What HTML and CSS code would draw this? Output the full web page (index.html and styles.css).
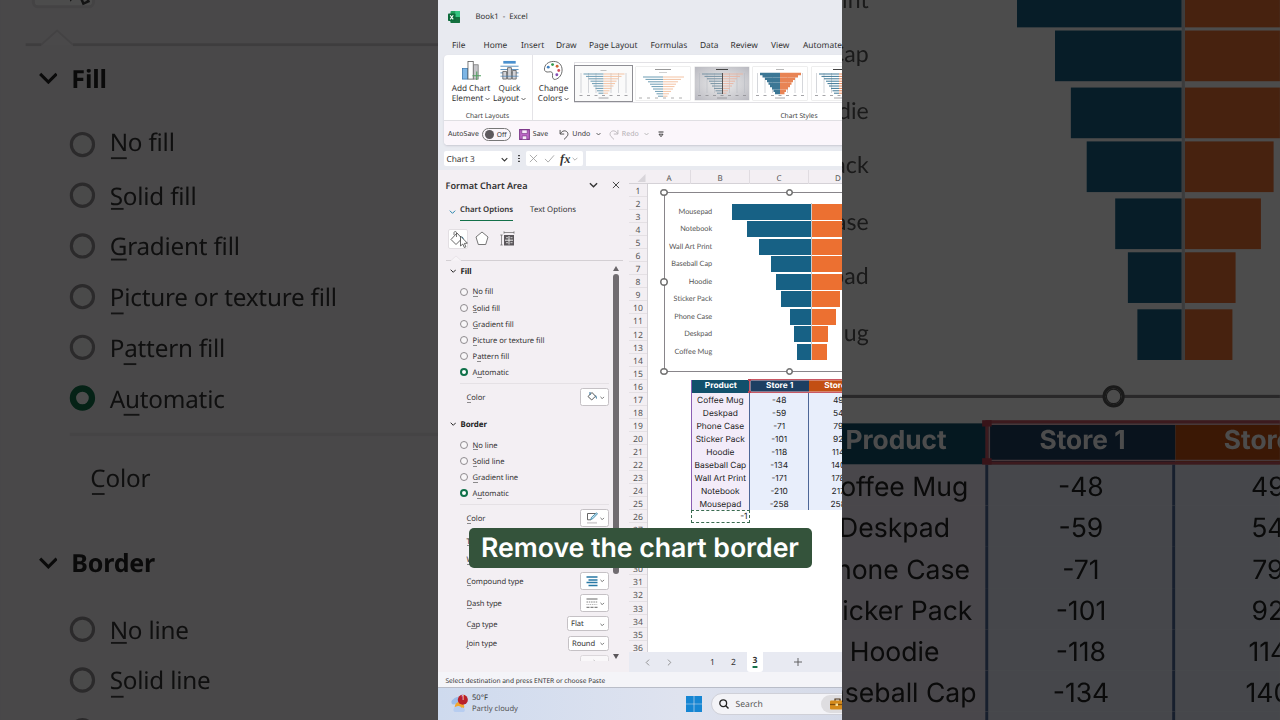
FILE: index.html
```html
<!DOCTYPE html>
<html lang="en">
<head>
  <meta charset="UTF-8">
  <title>Book1 - Excel</title>
  <meta name="viewport" content="width=device-width, initial-scale=1.0">
  <link rel="stylesheet" href="styles.css">
</head>
<body>

  <!-- shared shapes -->
  <svg class="defs" width="0" height="0">
    <symbol id="chev" viewBox="0 0 10 6"><path d="M1 1l4 4 4-4" fill="none" stroke="currentColor" stroke-width="1.5"/></symbol>
    <symbol id="bars-left" viewBox="0 0 54 33"><path d="M7 7H27M9.5 9.4H27M12 11.8H27M14 14.2H27M15.5 16.6H27M17 19H27M19 21.4H27M20.5 23.8H27M22 26.2H27" fill="none" stroke="currentColor"/></symbol>
    <symbol id="bars-right" viewBox="0 0 54 33"><path d="M27 7H48M27 9.4H45M27 11.8H42M27 14.2H40M27 16.6H38.5M27 19H37M27 21.4H35M27 23.8H33M27 26.2H31.5" fill="none" stroke="currentColor"/></symbol>
    <symbol id="thumb-grid" viewBox="0 0 54 33"><path d="M4.5 6v20M12 6v20M19.5 6v20M34.5 6v20M42 6v20M49.5 6v20" stroke="#b9bcc3" stroke-width=".6"/><path d="M3 28.5h3M10.5 28.5h3M18 28.5h3M25.5 28.5h3M33 28.5h3M40.5 28.5h3M48 28.5h3M22 31h10" stroke="#8d8d92" stroke-width=".8"/></symbol>
  </svg>

  <div class="backdrop" id="backdrop"></div>

  <div class="screen" id="screen">

    <!-- title bar -->
    <div class="titlebar">
      <svg class="xl" viewBox="0 0 12 12"><rect x="2.5" width="9.5" height="12" rx="1" fill="#1f9d5b"/><rect x="7.2" width="4.8" height="6" fill="#35c481"/><rect x="2.5" y="6" width="9.5" height="6" rx="1" fill="#14713f"/><rect y="2.5" width="7.5" height="7.5" rx=".8" fill="#0d6b3b"/><path d="M2.2 4.2l3 4.2M5.2 4.2l-3 4.2" stroke="#fff" stroke-width="1.1"/></svg>
      <span>Book1&nbsp; -&nbsp; Excel</span>
    </div>

    <div class="tabs">
      <span>File</span><span>Home</span><span>Insert</span><span>Draw</span><span>Page Layout</span><span>Formulas</span><span>Data</span><span>Review</span><span>View</span><span>Automate</span>
    </div>

    <!-- ribbon -->
    <div class="ribbon">
      <div class="ribbon-main">
        <div class="group layouts">
          <div class="tools">
            <div class="tool">
              <svg viewBox="0 0 22 22"><rect x="1.5" y="9" width="5.5" height="11" fill="#7db5e4" stroke="#3b78ad" stroke-width=".8"/><rect x="7.3" y="1.5" width="5.5" height="18.5" fill="#fff" stroke="#555" stroke-width=".8"/><rect x="13" y="5" width="5" height="15" fill="#c6c6c9" stroke="#777" stroke-width=".8"/><path d="M16.5 12v9M12 16.5h9" stroke="#4f9f5f" stroke-width="1.1"/></svg>
              <span>Add Chart</span><span>Element <svg class="chev"><use href="#chev"/></svg></span>
            </div>
            <div class="tool quick">
              <svg viewBox="0 0 22 22"><rect x="4.5" y="1" width="13" height="2.8" fill="#4a90cf"/><path d="M1.5 6.5h19M1.5 10h19M1.5 13.5h19" stroke="#3f7eb5" stroke-width=".9"/><path d="M4 12h4v8H4zM9 8h4v12H9zM14 11h4v9h-4z" fill="#d2d2d6" stroke="#555" stroke-width=".8"/><path d="M1.5 17h19" stroke="#3f7eb5" stroke-width=".7"/></svg>
              <span>Quick</span><span>Layout <svg class="chev"><use href="#chev"/></svg></span>
            </div>
          </div>
          <div class="group-name">Chart Layouts</div>
        </div>
        <div class="group styles">
          <div class="tools">
            <div class="tool colors">
              <svg viewBox="0 0 22 22"><path d="M11 1.5C5.5 1.5 1.5 5 1.5 9.5c0 2.5 2 3.5 4.5 3 3-.7 4.5.5 4 3.5-.5 3 1 4.800 3 4.300 4-1 7-5 7-9.800C20 5 16.5 1.5 11 1.5z" fill="#fff" stroke="#555" stroke-width=".9"/><circle cx="5.5" cy="7.5" r="1.5" fill="#3f7fc0"/><circle cx="10" cy="4.8" r="1.5" fill="#2f9a4a"/><circle cx="14.8" cy="6.5" r="1.5" fill="#d0662f"/><circle cx="16.5" cy="11" r="1.5" fill="#d14b5a"/><circle cx="14.5" cy="15.5" r="1.5" fill="#8452b5"/></svg>
              <span>Change</span><span>Colors <svg class="chev"><use href="#chev"/></svg></span>
            </div>
            <div class="gallery">
              <svg class="thumb picked" viewBox="0 0 54 33"><use href="#thumb-grid"/><path d="M24 3.5h6" stroke="#aaa" stroke-width=".7"/><use class="blue" href="#bars-left"/><use class="peach" href="#bars-right"/></svg>
              <svg class="thumb" viewBox="0 0 54 33"><path d="M19 2.5h16" stroke="#999"/><path d="M23 5.5h8" stroke="#bbb" stroke-width=".7"/><path d="M3 31h3M11 31h3M19 31h3M27 31h3M35 31h3M43 31h3" stroke="#999" stroke-width=".8"/><g transform="translate(0 3)"><use class="blue" href="#bars-left"/><use class="peach" href="#bars-right"/></g></svg>
              <svg class="thumb shade" viewBox="0 0 54 33"><use href="#thumb-grid"/><path d="M21 2.5h12" stroke="#444"/><use class="steel" href="#bars-left"/><use class="rose" href="#bars-right"/><path d="M27.5 6v21" stroke="#444" stroke-width=".9"/></svg>
              <svg class="thumb wide" viewBox="0 0 54 33"><use href="#thumb-grid"/><path d="M23 2.5h8" stroke="#999" stroke-width=".7"/><use class="navy" href="#bars-left"/><use class="orange" href="#bars-right"/></svg>
              <svg class="thumb" viewBox="0 0 54 33"><use href="#thumb-grid"/><path d="M21 2.5h12" stroke="#444"/><use class="navy" href="#bars-left"/><use class="orange" href="#bars-right"/></svg>
            </div>
          </div>
          <div class="group-name">Chart Styles</div>
        </div>
      </div>
      <div class="qat">
        <span>AutoSave</span>
        <span class="toggle"><i></i>Off</span>
        <svg class="save" viewBox="0 0 12 12"><path d="M.7.7h10.6v10.6H.7z" fill="#c06ac9" stroke="#7f3a8c" stroke-width="1.2"/><path d="M3 1h6v4H3zM3.5 7.5h5v4h-5z" fill="#f7e9f8" stroke="#7f3a8c" stroke-width=".8"/></svg>
        <span class="save-t">Save</span>
        <svg class="undo" viewBox="0 0 11 12"><path d="M1.2 1v4.5h4.5M1.5 5.2C3 2.5 5.2 1.5 7.3 2.2c2.8 1 3.2 4 1.5 6L5.5 11.4" fill="none" stroke="#444"/></svg>
        <span class="undo-t">Undo</span><svg class="chev"><use href="#chev"/></svg>
        <svg class="redo" viewBox="0 0 11 12"><path d="M9.8 1v4.5H5.3M9.5 5.2C8 2.5 5.8 1.5 3.7 2.2c-2.8 1-3.2 4-1.5 6L5.5 11.4" fill="none" stroke="#b9b5ba"/></svg>
        <span class="redo-t">Redo</span><svg class="chev dim"><use href="#chev"/></svg>
        <svg class="more" viewBox="0 0 6 7"><path d="M.5 1h5" stroke="#333"/><path d="M1 3.2h4L3 5.7z" fill="none" stroke="#333" stroke-width=".9"/></svg>
      </div>
    </div>

    <!-- formula bar -->
    <div class="formula">
      <div class="name-box">Chart 3 <svg class="chev"><use href="#chev"/></svg></div>
      <svg class="grip" viewBox="0 0 2 8"><path d="M0 .7h2M0 4h2M0 7.3h2" stroke="#333" stroke-width="1.3"/></svg>
      <div class="fx-box">
        <svg viewBox="0 0 10 10"><path d="M1 1l8 8M9 1L1 9" stroke="#999" stroke-width=".9"/></svg>
        <svg class="tick" viewBox="0 0 12 10"><path d="M1 5.5L4.5 9 11 1.5" fill="none" stroke="#999" stroke-width=".9"/></svg>
        <b>fx</b><svg class="chev dim"><use href="#chev"/></svg>
      </div>
      <div class="formula-input"></div>
    </div>

    <div class="work">

      <!-- format pane -->
      <div class="pane">
        <div class="pane-head">
          <span>Format Chart Area</span>
          <svg class="down"><use href="#chev"/></svg>
          <svg class="close" viewBox="0 0 9 9"><path d="M1 1l7 7M8 1L1 8" stroke="#333" stroke-width="1"/></svg>
        </div>
        <div class="pane-tabs">
          <svg class="chev"><use href="#chev"/></svg>
          <span class="on">Chart Options</span><span>Text Options</span>
        </div>
        <div class="pane-icons">
          <div class="bucket">
            <svg viewBox="0 0 20 19"><path d="M3 9.5l6-6.5 5 5.5-6 6z" fill="#fff" stroke="#555" stroke-width=".9"/><path d="M6 5V2.5c0-1.2 2.5-1.2 2.5 0V7" fill="none" stroke="#555" stroke-width=".8"/><path d="M13.500 7c1.800.5 2 2 1.700 5" fill="none" stroke="#2f80a8" stroke-width="1.2"/><path d="M12.5 6v10l2.300-2 1.500 3.500 1.600-.7-1.500-3.400 3-.2z" fill="#fff" stroke="#444" stroke-width=".8"/></svg>
          </div>
          <svg class="penta" viewBox="0 0 14 15"><path d="M7 1l6 5-2.300 7.500H3.300L1 6z" fill="#fff" stroke="#555" stroke-width=".8"/></svg>
          <svg class="size" viewBox="0 0 15 15"><path d="M4 1.5h10M4 .3v2.4M14 .3v2.4M1.5 4v10M.3 4h2.4M.3 14h2.4" stroke="#666" stroke-width=".7"/><path d="M4 4h10v10.5H4z" fill="#5b575b"/><path d="M9 5v8.5M5 9.2h8" stroke="#eee" stroke-width="1"/><path d="M6 6.7h2M10.5 6.7h2M6 11.7h2M10.5 11.7h2" stroke="#eee" stroke-width=".8"/></svg>
        </div>
        <svg class="notch" viewBox="0 0 177 6"><path d="M5 5.5l5-4.5 5 4.500" fill="#f7f4f7" stroke="#e0dce0" stroke-width=".6"/><path d="M0 5.5h5M15 5.5h162" fill="none" stroke="#cfcbcf" stroke-width=".9"/></svg>

        <div class="pane-body">
          <div class="options">
            <div class="section"><svg class="chev"><use href="#chev"/></svg>Fill</div>
            <div class="radios">
              <div><i></i><span><u>N</u>o fill</span></div>
              <div><i></i><span><u>S</u>olid fill</span></div>
              <div><i></i><span><u>G</u>radient fill</span></div>
              <div><i></i><span><u>P</u>icture or texture fill</span></div>
              <div><i></i><span>P<u>a</u>ttern fill</span></div>
              <div><i class="on"></i><span>A<u>u</u>tomatic</span></div>
            </div>
            <div class="prop color"><span><u>C</u>olor</span>
              <div class="pick"><svg class="pic" viewBox="0 0 12 12"><path d="M2 5.5L6 1.5l3.5 3.7L5.7 9z" fill="#fff" stroke="#444" stroke-width=".9"/><path d="M4 4V1M9.7 4.5l.8 3" stroke="#2f6f96"/></svg><svg class="chev"><use href="#chev"/></svg></div>
            </div>
            <div class="section second"><svg class="chev"><use href="#chev"/></svg>Border</div>
            <div class="radios">
              <div><i></i><span><u>N</u>o line</span></div>
              <div><i></i><span><u>S</u>olid line</span></div>
              <div><i></i><span><u>G</u>radient line</span></div>
              <div><i class="on"></i><span>A<u>u</u>tomatic</span></div>
            </div>
            <div class="prop color"><span><u>C</u>olor</span>
              <div class="pick"><svg class="pic" viewBox="0 0 12 12"><path d="M9.5 1.5H1.5v6.3H5" fill="none" stroke="#555" stroke-width=".9"/><path d="M4.8 7.5l.7-2.2L10.5.8l1 1-4.8 5z" fill="#bfe0ee" stroke="#2b7ea3" stroke-width=".8"/><path d="M1 10.8h10" stroke="#d5d3d5" stroke-width="1.8"/></svg><svg class="chev"><use href="#chev"/></svg></div>
            </div>
            <div class="prop transp"><span><u>T</u>ransparency</span></div>
            <div class="prop width"><span><u>W</u>idth</span></div>
            <div class="prop compound"><span><u>C</u>ompound type</span>
              <div class="pick"><svg class="pic" viewBox="0 0 12 12"><path d="M.5 2h11M2.5 5h9M.5 7.5h11M2.5 10.5h9" stroke="#2878a5" stroke-width="1.5"/></svg><svg class="chev"><use href="#chev"/></svg></div>
            </div>
            <div class="prop dash"><span><u>D</u>ash type</span>
              <div class="pick"><svg class="pic" viewBox="0 0 12 12"><path d="M.5 2h11" stroke="#555" stroke-width=".9"/><path d="M.5 5h11" stroke="#777" stroke-width=".9" stroke-dasharray="1.5 .8"/><path d="M.5 7.5h11" stroke="#999" stroke-width=".8" stroke-dasharray="1 .8"/><path d="M.5 10.3h11" stroke="#555" stroke-width=".9" stroke-dasharray="3 1"/></svg><svg class="chev"><use href="#chev"/></svg></div>
            </div>
            <div class="prop cap"><span>C<u>a</u>p type</span><div class="pick text">Flat<svg class="chev"><use href="#chev"/></svg></div></div>
            <div class="prop join"><span><u>J</u>oin type</span><div class="pick text join-pick">Round<svg class="chev"><use href="#chev"/></svg></div></div>
            <div class="prop begin"><span><u>B</u>egin Arrow type</span><div class="pick faded"><svg class="pic" viewBox="0 0 12 12"><path d="M0 4h10M7.5 2L10 4 7.5 6" fill="none" stroke="#777" stroke-width=".8"/></svg></div></div>
          </div>
          <div class="scroll">
            <svg viewBox="0 0 6 5"><path d="M3 0l3 5H0z" fill="#6b676b"/></svg>
            <i></i>
            <svg viewBox="0 0 6 5"><path d="M3 5L0 0h6z" fill="#5b575b"/></svg>
          </div>
        </div>
      </div>

      <!-- worksheet -->
      <div class="book">
        <div class="sheet">
          <div class="corner"><svg viewBox="0 0 9 9"><path d="M9 0v9H0z" fill="#d8d5da"/></svg></div>
          <div class="cols"><span>A</span><span>B</span><span>C</span><span>D</span></div>
          <div class="rows">
            <span>1</span><span>2</span><span>3</span><span>4</span><span>5</span><span>6</span><span>7</span><span>8</span><span>9</span><span>10</span><span>11</span><span>12</span><span>13</span><span>14</span><span>15</span><span>16</span><span>17</span><span>18</span><span>19</span><span>20</span><span>21</span><span>22</span><span>23</span><span>24</span><span>25</span><span>26</span><span>27</span><span>28</span><span>29</span><span>30</span><span>31</span><span>32</span><span>33</span><span>34</span><span>35</span><span>36</span>
          </div>
          <div class="cells">
            <div class="data">
              <b>Product</b><b class="s1">Store 1</b><b class="s2">Store 2</b>
              <span>Coffee Mug</span><span>-48</span><span>49</span>
              <span>Deskpad</span><span>-59</span><span>54</span>
              <span>Phone Case</span><span>-71</span><span>79</span>
              <span>Sticker Pack</span><span>-101</span><span>92</span>
              <span>Hoodie</span><span>-118</span><span>114</span>
              <span>Baseball Cap</span><span>-134</span><span>140</span>
              <span>Wall Art Print</span><span>-171</span><span>178</span>
              <span>Notebook</span><span>-210</span><span>217</span>
              <span>Mousepad</span><span>-258</span><span>258</span>
              <div class="range"><i></i><i></i></div>
            </div>
            <div class="copied">-1</div>

            <!-- floating chart object -->
            <div class="chart">
              <div class="bar-row"><span>Mousepad</span><i class="neg" style="width:79px"></i><i class="pos" style="width:79px"></i></div>
              <div class="bar-row"><span>Notebook</span><i class="neg" style="width:64px"></i><i class="pos" style="width:66px"></i></div>
              <div class="bar-row"><span>Wall Art Print</span><i class="neg" style="width:52px"></i><i class="pos" style="width:54px"></i></div>
              <div class="bar-row"><span>Baseball Cap</span><i class="neg" style="width:40.5px"></i><i class="pos" style="width:43px"></i></div>
              <div class="bar-row"><span>Hoodie</span><i class="neg" style="width:35.5px"></i><i class="pos" style="width:35px"></i></div>
              <div class="bar-row"><span>Sticker Pack</span><i class="neg" style="width:30.5px"></i><i class="pos" style="width:27.8px"></i></div>
              <div class="bar-row"><span>Phone Case</span><i class="neg" style="width:21px"></i><i class="pos" style="width:23.6px"></i></div>
              <div class="bar-row"><span>Deskpad</span><i class="neg" style="width:17.7px"></i><i class="pos" style="width:16.2px"></i></div>
              <div class="bar-row"><span>Coffee Mug</span><i class="neg" style="width:14px"></i><i class="pos" style="width:14.5px"></i></div>
              <em class="axis"></em>
              <em class="handle tl"></em><em class="handle tm"></em><em class="handle ml"></em><em class="handle bl"></em><em class="handle bm"></em>
            </div>
          </div>
        </div>
        <div class="sheet-tabs">
          <svg class="nav" viewBox="0 0 5 8"><path d="M4.3.7L1 4l3.3 3.3" fill="none" stroke="#888"/></svg>
          <svg class="nav" viewBox="0 0 5 8"><path d="M.7.7L4 4 .7 7.3" fill="none" stroke="#888"/></svg>
          <span class="first">1</span><span>2</span><span class="on">3</span>
          <svg class="plus" viewBox="0 0 8 8"><path d="M4 0v8M0 4h8" stroke="#555" stroke-width=".9"/></svg>
        </div>
      </div>
    </div>

    <div class="status">Select destination and press ENTER or choose Paste</div>

    <!-- windows taskbar -->
    <div class="taskbar">
      <div class="weather">
        <svg viewBox="0 0 20 20"><path d="M3 10.5a3 3 0 0 1 .5-5.5 4.5 4.5 0 0 1 7-1l1 6z" fill="#9dbce8"/><circle cx="10" cy="13" r="5" fill="#f2a62d"/><path d="M5 18.5a3 3 0 0 1 1-5.5 4 4 0 0 1 6 1c3-1.5 5 2.5 2.5 4.5z" fill="#b7cdf0"/><circle cx="13.5" cy="5.5" r="5.3" fill="#b8202a"/></svg>
        <span class="count">1</span>
        <div>50°F<br><span>Partly cloudy</span></div>
      </div>
      <svg class="win" viewBox="0 0 16 16"><path d="M0 0h7.7v7.7H0zM8.3 0H16v7.7H8.3zM0 8.3h7.7V16H0zM8.3 8.3H16V16H8.3z" fill="#1686d3"/></svg>
      <div class="search">
        <svg viewBox="0 0 10 10"><circle cx="4.2" cy="4.2" r="3.4" fill="none" stroke="#222" stroke-width="1.3"/><path d="M6.8 6.8L9.5 9.5" stroke="#222" stroke-width="1.4"/></svg>
        <span>Search</span>
        <div class="case"><svg viewBox="0 0 14 12"><path d="M5 3V1h5v2" fill="none" stroke="#4a3216" stroke-width="1.2"/><rect y="2.5" width="14" height="9" rx="1" fill="#d48a1c"/><path d="M0 6.5h14" stroke="#7f4d0d" stroke-width="1.2"/><rect x="5.5" y="5.5" width="2.5" height="2.5" fill="#f5dd9a"/></svg></div>
      </div>
    </div>

    <div class="caption">Remove the chart border</div>
  </div>

  <script>
    // enlarged, dimmed copy of the screen fills both sides
    const screenEl = document.getElementById('screen');
    const copy = screenEl.cloneNode(true);
    copy.removeAttribute('id');
    copy.setAttribute('aria-hidden', 'true');
    document.getElementById('backdrop').appendChild(copy);
  </script>
</body>
</html>
```
FILE: styles.css
```css
/* ==== Reset & Base ==== */
* { margin:0; padding:0; box-sizing:border-box; }
html, body { width:1280px; height:720px; overflow:hidden; background:#494749; }
body {
  font-family:"Noto Sans","Open Sans",sans-serif;
  font-size:8px; color:#333; position:relative;
  display:flex; justify-content:center;
  text-rendering:geometricPrecision;
}
i, em { font-style:normal; display:block; }
svg { display:block; flex:none; }
.defs { position:absolute; }

.screen {
  width:404px; height:720px; overflow:hidden; position:relative; flex:none;
  display:flex; flex-direction:column; background:#e8eaf0;
}
.backdrop {
  position:absolute; inset:0; overflow:hidden;
  display:flex; justify-content:center; filter:brightness(.3);
}
.backdrop .screen { transform:scale(3.168); }
/* parts of the copy that never reach the sides */
.backdrop .titlebar, .backdrop .tabs, .backdrop .ribbon, .backdrop .formula,
.backdrop .pane-head, .backdrop .pane-tabs, .backdrop .cols, .backdrop .rows,
.backdrop .copied, .backdrop .prop:not(.color), .backdrop .second ~ .color,
.backdrop .sheet-tabs, .backdrop .status, .backdrop .taskbar, .backdrop .caption { visibility:hidden; }
.chev { width:5px; height:4px; }
.dim { color:#aaa; }

/* ==== title + tabs ==== */
.titlebar { height:33px; padding:0 0 0 10px; display:flex; align-items:center; gap:15.5px; font-size:7.8px; flex:none; }
.xl { width:12px; height:12px; }
.tabs {
  height:22px; flex:none; padding-left:14px; white-space:nowrap; line-height:25px; font-size:8.4px; color:#333;
  display:grid; grid-template-columns:31.5px 37.5px 35px 33px 61.5px 49.5px 30.5px 40.5px 32px 60px;
}

/* ==== ribbon ==== */
.ribbon { margin-left:5.5px; width:410px; height:90px; flex:none; border-radius:4px; overflow:hidden; background:#fff; box-shadow:0 1px 2px #c9c9d2; }
.ribbon-main { height:66px; display:flex; border-bottom:1px solid #e0dfe3; }
.group { padding-top:5px; }
.layouts { width:89px; border-right:1px solid #e4e3e7; flex:none; }
.styles { flex:1; }
.tools { display:flex; height:49px; }
.layouts .tools { padding-left:7px; }
.tool { width:41px; flex:none; display:flex; flex-direction:column; align-items:center; font-size:8.2px; line-height:10.5px; white-space:nowrap; }
.tool > svg { width:21px; height:21px; margin-bottom:2.5px; }
.tool span { display:flex; align-items:center; gap:2px; }
.quick { width:36px; }
.colors { width:42px; }
.group-name { font-size:6.7px; line-height:13px; text-align:center; color:#444; }
.styles .group-name { margin-left:214px; width:105px; }
.gallery { display:flex; gap:4.5px; height:41px; margin:2px 0 0 -1px; padding:2px 1px; width:300px; border:1px solid #e2e1e5; border-right:0; }
.thumb { width:54px; height:33px; margin-top:2px; background:#fff; box-shadow:0 0 0 .5px #ddd; }
.picked { width:59px; height:37px; margin:0 -1px 0 -2px; padding:1px; background:#fafafa; border:1px solid #8e8e94; box-shadow:none; }
.shade { background:radial-gradient(#eee,#b9b9c0); }
.wide use.navy, .wide use.orange { stroke-width:2.3; }
.blue { color:#6d9cb3; } .peach { color:#f3c3a4; }
.steel { color:#7692a3; } .rose { color:#e8b7a5; }
.navy { color:#3c7795; } .orange { color:#e88455; }

.qat { height:24px; background:#fbf6fb; padding:2px 0 0 4.5px; display:flex; align-items:center; font-size:7px; }
.toggle { margin-left:3.5px; width:29px; height:13px; border:1px solid #777; border-radius:7px; display:flex; align-items:center; gap:3px; padding-left:1.5px; font-size:6.7px; }
.toggle i { width:9px; height:9px; border-radius:50%; background:#5d595d; }
.save { width:11px; height:11px; margin-left:8px; }
.save-t { margin-left:2.5px; width:26.5px; }
.undo, .redo { width:10px; height:11px; }
.undo-t { margin-left:3px; width:23.5px; }
.redo { margin-left:8px; }
.redo-t { margin-left:3px; width:22px; color:#b3afb4; }
.more { width:6px; height:7px; margin-left:9px; }

/* ==== formula bar ==== */
.formula { height:25px; padding:6px 0 4px 5.5px; display:flex; flex:none; align-items:stretch; }
.name-box { width:68px; background:#fff; border-radius:2px; padding:1px 4px 0 3px; display:flex; align-items:center; justify-content:space-between; font-size:8.3px; }
.name-box .chev { width:7px; height:5px; }
.grip { width:2px; height:7px; margin:4px 6px 0; }
.fx-box { width:57px; background:#fff; border-radius:2px; display:flex; align-items:center; gap:6px; padding-left:3px; }
.fx-box svg { width:9px; height:9px; }
.fx-box .tick { width:11px; }
.fx-box b { font:italic bold 12.5px "Liberation Serif",serif; line-height:14px; margin-left:-.5px; }
.fx-box .chev { width:6px; height:4px; margin-left:-4px; }
.formula-input { margin-left:3px; flex:1; background:#fff; }

/* ==== format pane ==== */
.work { height:502px; display:flex; flex:none; }
.pane { width:191px; background:#f3eff3; height:502px; padding-left:7.5px; flex:none; display:flex; flex-direction:column; }
.pane-head { height:30px; display:flex; align-items:center; font-size:9.1px; font-weight:600; flex:none; }
.pane-head span { width:143.5px; white-space:nowrap; }
.down { width:9px; height:6px; }
.close { width:8px; height:8px; margin-left:13.5px; }
.pane-tabs { height:20.5px; display:flex; align-items:flex-start; font-size:7.8px; flex:none; line-height:21px; white-space:nowrap; }
.pane-tabs .chev { width:7px; height:4px; color:#2884ac; margin:9.5px 4.5px 0 3px; }
.pane-tabs .on { font-weight:600; height:20.5px; border-bottom:1.5px solid #14714a; margin-right:17px; }
.pane-icons { display:flex; align-items:center; height:33px; margin-top:1.5px; padding:4px 0 4px 2px; flex:none; }
.bucket { width:20px; height:20px; background:#fff; border:1px solid #e3dfe3; border-radius:2px; }
.bucket svg { width:20px; height:19px; margin-left:-1px; }
.penta { width:14px; height:15px; margin-left:7.5px; }
.size { width:15px; height:15px; margin-left:10.5px; }
.notch { width:177px; height:6px; flex:none; margin-top:-.3px; }
.pane-body { display:flex; height:401px; margin-top:-.7px; overflow:hidden; }
.options { width:163px; font-size:7.65px; white-space:nowrap; letter-spacing:-.06px; }
/* accelerator letters */
u { text-decoration:none; background:linear-gradient(#444,#444) 0 calc(100% - .8px) / 100% .6px no-repeat; }
.section { height:17px; margin-top:2px; padding:2px 0 0 4px; display:flex; align-items:center; gap:4.5px; font-size:7.9px; font-weight:700; color:#222; }
.section .chev { width:6.5px; height:4px; margin-top:-1px; }
.second { margin-top:4.5px; }
.radios { margin:4.4px 0 0 14.5px; padding-bottom:2.4px; border-bottom:1px solid #e5e1e5; }
.radios div { height:16.2px; display:flex; align-items:center; gap:4.6px; }
.radios span { padding-top:1.9px; }
.radios i { width:8px; height:8px; border:1px solid #8f8b8f; border-radius:50%; background:#f8f6f8; }
.radios i.on { border:2px solid #10714a; background:#fff; }
.prop { padding-left:21px; display:flex; align-items:center; justify-content:space-between; }
.prop > span { padding-top:1.9px; }
.color { height:27px; }
.transp { height:18px; }
.width { height:19px; }
.compound { height:24px; }
.dash { height:21px; }
.cap { height:20px; }
.join { height:19px; }
.begin { height:22px; }
.pick { width:29px; height:18px; background:#fff; border:.8px solid #c5c1c5; border-radius:2.5px; display:flex; align-items:center; justify-content:space-between; padding:0 3px 0 5px; }
.pick .pic { width:12px; height:12px; }
.pick .chev { width:4.5px; height:3.5px; }
.pick.text { width:41.5px; height:15px; padding:1px 3px 0; font-size:7.6px; }
.pick.join-pick { width:40.5px; }
.faded { opacity:.5; }
.scroll { margin-left:4.5px; padding-top:6px; width:7px; }
.scroll svg { width:6px; height:5px; }
.scroll i { width:6px; height:299.5px; margin:3px 0 80.5px; border-radius:3px; background:#706c70; }

/* ==== sheet ==== */
.book { width:213px; background:#e8eaf2; display:flex; flex-direction:column; }
.sheet { height:482px; display:grid; grid-template-columns:19px 194px; grid-template-rows:14px 468px; overflow:hidden; background:#fff; }
.corner { background:#f3eff3; border-bottom:1px solid #d5d2d7; padding:4px 0 0 8px; }
.corner svg { width:9px; height:8px; }
.cols { background:#f3eff3; border-bottom:1px solid #d5d2d7; display:grid; grid-template-columns:43px 59px 59px 59px; }
.cols span { text-align:center; line-height:18px; font-size:8px; color:#555; border-right:1px solid #e0dce1; }
.rows { background:#f3eff3; border-right:1px solid #d5d2d7; }
.rows span { display:block; height:13.05px; line-height:15.5px; font-size:8.6px; text-align:center; color:#555; border-bottom:.5px solid #e4e0e4; }
.cells { position:relative; display:grid; grid-template-columns:42.5px 59px 59px 59px; grid-template-rows:repeat(36,13.05px); background:#fff; }
.data {
  grid-column:2 / 5; grid-row:16 / 26; position:relative;
  display:grid; grid-template-columns:58.7px 59px 59px; grid-auto-rows:13.05px;
  text-align:center; font:8.4px/16px Inter,Roboto,sans-serif; color:#222;
  border-left:.8px solid #8a5db3; border-bottom:1px solid #4b6fa8;
}
.data b { background:#12506c; color:#fff; font-size:8.3px; line-height:13.6px; }
.data .s1 { background:#1d3f62; }
.data .s2 { background:#c34f12; }
.data > span { background:#e8eefb; border-right:.6px solid #4d6697; white-space:nowrap; }
.data > span:nth-of-type(3n+1) { background:#f3ecf9; }
/* red header range */
.range { position:absolute; left:57.4px; top:-.5px; width:130px; height:13.5px; border:1px solid #c95864; box-shadow:inset 0 0 0 .5px #eab9c2; }
.range i { position:absolute; left:-1.7px; width:2.5px; height:2.5px; background:#bb4152; }
.range i:first-child { top:-1.5px; }
.range i:last-child { bottom:-1.5px; }
.copied { grid-column:2; grid-row:26; border:1px dashed #396b50; text-align:right; padding-right:1px; font:8.5px/13px Inter,sans-serif; color:#222; }

/* ==== chart ==== */
.chart { position:absolute; left:15.7px; top:8px; width:252px; height:180px; padding-top:10.5px; background:#fff; border:1px solid #88858a; }
.bar-row { height:15.3px; margin-bottom:2.28px; display:grid; grid-template-columns:47.5px 99.5px 90px; align-items:stretch; }
.bar-row span { justify-self:end; white-space:nowrap; font:7.3px/16px Lato,sans-serif; color:#555; }
.neg { background:#176185; justify-self:end; margin-right:.4px; }
.pos { background:#ec7031; margin-left:.5px; }
.axis { position:absolute; left:146.5px; top:10px; width:1px; height:157px; background:#c9c9cc; }
.handle { position:absolute; width:7.6px; height:7.6px; border:1px solid #555; border-radius:50%; background:#fff; box-shadow:inset 0 0 0 .4px #555; }
.tl { left:-4.3px; top:-4.3px; } .tm { left:120.9px; top:-4.3px; }
.ml { left:-4.3px; top:85px; }
.bl { left:-4.3px; bottom:-4.3px; } .bm { left:120.9px; bottom:-4.3px; }

.sheet-tabs { height:20px; display:flex; align-items:center; padding-left:16px; font-size:8.5px; }
.nav { width:5px; height:7px; margin-right:17px; }
.sheet-tabs span { width:21px; height:20px; line-height:21.5px; text-align:center; }
.sheet-tabs .first { margin-left:13px; }
.sheet-tabs .on { width:16px; margin-left:3px; background:#fff; font-weight:700; text-decoration:underline #14714a 1.5px; text-underline-offset:3px; line-height:17.5px; border-radius:0 0 3px 3px; }
.plus { width:8px; height:8px; margin-left:31px; }

/* ==== bottom bars ==== */
.status { height:16px; line-height:17px; background:#f4f4f8; padding-left:7.5px; font-size:6.6px; flex:none; border-bottom:1px solid #b9bdc8; }
.taskbar { height:32px; flex:none; display:flex; align-items:center; background:linear-gradient(90deg,#cedaee,#dfe3ef 60%,#d5dae8); position:relative; }
.weather { width:235px; flex:none; padding-left:12px; display:flex; align-items:center; gap:4px; margin-right:12.5px; font-size:7.6px; line-height:11.5px; position:relative; }
.weather svg { width:19px; height:20px; margin-right:-1px; }
.weather div span { color:#555; }
.count { position:absolute; left:23px; top:0; color:#fff; font-size:7px; }
.win { width:16px; height:16px; }
.search { margin-left:9px; width:160px; height:22px; border-radius:11px; background:#f3f3f7; border:.5px solid #cfd0d8; display:flex; align-items:center; padding-left:7px; font-size:8.6px; color:#555; flex:none; }
.search svg { width:10px; height:10px; margin-right:7px; }
.search span { width:52px; }
.case { background:#dedde0; width:50px; height:18px; margin-left:36px; border-radius:9px; padding:3px 9px; }
.search .case svg { width:14px; height:12px; }

/* ==== subtitle ==== */
.caption {
  position:absolute; left:30.5px; top:527.5px; width:343px; height:40.5px; border-radius:5px;
  background:#34533b; color:#fff; text-align:center; white-space:nowrap;
  font:600 26.7px/40px Inter,sans-serif; letter-spacing:-.05px;
}
```
